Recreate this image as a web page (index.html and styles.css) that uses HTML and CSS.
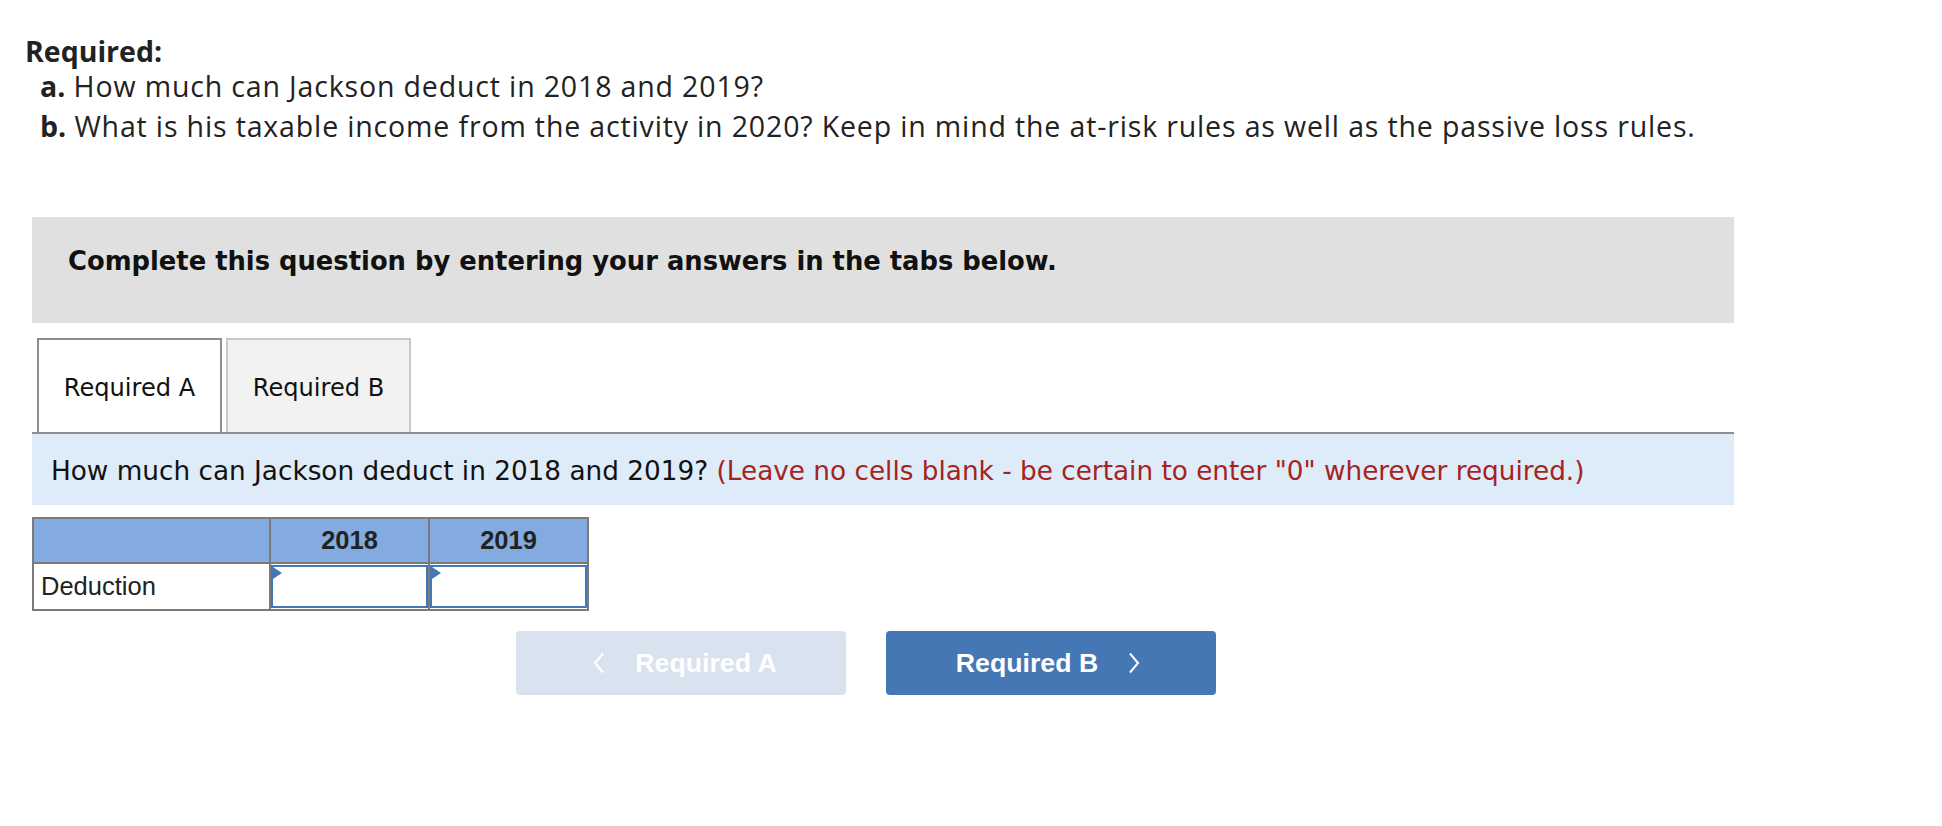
FILE: index.html
```html
<!DOCTYPE html>
<html lang="en">
<head>
<meta charset="utf-8">
<title>Required</title>
<link rel="stylesheet" href="styles.css">
</head>
<body>
<div class="page">
  <div class="req">
    <div class="req-title">Required:</div>
    <div class="req-item"><b>a.</b> How much can Jackson deduct in 2018 and 2019?</div>
    <div class="req-item"><b>b.</b> What is his taxable income from the activity in 2020? Keep in mind the at-risk rules as well as the passive loss rules.</div>
  </div>

  <div class="banner">Complete this question by entering your answers in the tabs below.</div>

  <div class="tabs">
    <div class="tab tab-active">Required A</div>
    <div class="tab tab-idle">Required B</div>
  </div>

  <div class="prompt">How much can Jackson deduct in 2018 and 2019? <span class="note">(Leave no cells blank - be certain to enter "0" wherever required.)</span></div>

  <table class="grid">
    <tr class="head">
      <th class="c-label"></th>
      <th class="c-val">2018</th>
      <th class="c-val">2019</th>
    </tr>
    <tr class="row">
      <td class="c-label label">Deduction</td>
      <td class="c-val cell"><div class="input"><span class="flag"></span></div></td>
      <td class="c-val cell"><div class="input"><span class="flag"></span></div></td>
    </tr>
  </table>

  <div class="nav">
    <div class="btn btn-disabled">
      <svg class="chev" width="12" height="22" viewBox="0 0 12 22"><polyline points="10,1.5 2,11 10,20.5" fill="none" stroke="#ffffff" stroke-width="2"/></svg>
      <span>Required A</span>
    </div>
    <div class="btn btn-primary">
      <span>Required B</span>
      <svg class="chev" width="12" height="22" viewBox="0 0 12 22"><polyline points="2,1.5 10,11 2,20.5" fill="none" stroke="#ffffff" stroke-width="2"/></svg>
    </div>
  </div>
</div>
</body>
</html>
```

FILE: styles.css
```css
html, body {
  margin: 0;
  padding: 0;
  background: #ffffff;
}

.page {
  width: 1702px;
  margin-left: 32px;
  padding-top: 36px;
  color: #222222;
}

.req {
  margin-left: -7px;
  font-family: "Open Sans", "Liberation Sans", sans-serif;
  font-size: 28.5px;
  color: #222222;
}

.req-title {
  font-weight: 700;
  line-height: 30px;
}

.req-item {
  padding-left: 15px;
  line-height: 40px;
  letter-spacing: 0.85px;
}

.req-item b {
  font-weight: 700;
  letter-spacing: 0;
}

.banner {
  box-sizing: border-box;
  height: 106px;
  margin-top: 71px;
  padding: 29px 36px 0;
  background: #e0e0e0;
  font-family: "DejaVu Sans", Verdana, sans-serif;
  font-weight: 700;
  font-size: 25.8px;
  color: #111111;
}

.tabs {
  display: flex;
  gap: 4px;
  margin-top: 15px;
  padding-left: 5px;
  border-bottom: 2px solid #8e8e8e;
}

.tab {
  box-sizing: border-box;
  width: 185px;
  height: 94px;
  display: flex;
  align-items: center;
  justify-content: center;
  padding-top: 4px;
  font-family: "DejaVu Sans", Verdana, sans-serif;
  font-size: 24.1px;
  color: #111111;
}

.tab-active {
  border: 2px solid #8e8e8e;
  border-bottom: none;
  background: #ffffff;
}

.tab-idle {
  border: 2px solid #c8c8c8;
  border-bottom: none;
  background: #f2f2f2;
}

.prompt {
  box-sizing: border-box;
  height: 71px;
  display: flex;
  align-items: center;
  padding-left: 19px;
  padding-top: 2px;
  background: #deebf8;
  font-family: "DejaVu Sans", Verdana, sans-serif;
  font-size: 26.3px;
  color: #111111;
  white-space: pre;
}

.note {
  color: #a6231d;
}

.grid {
  margin-top: 12px;
  border-collapse: collapse;
  font-family: "Liberation Sans", Arial, sans-serif;
  font-size: 25.5px;
  color: #222222;
}

.grid th,
.grid td {
  border: 2px solid #7a7a7a;
  padding: 0;
}

.c-label {
  width: 228px;
}

.c-val {
  width: 157px;
}

.head th {
  height: 43px;
  background: #84abdf;
  font-weight: 700;
  text-align: center;
}

.row td {
  height: 45px;
}

.label {
  padding-left: 7px !important;
  text-align: left;
}

.input {
  position: relative;
  box-sizing: border-box;
  height: 43px;
  border: 2px solid #4677b5;
  background: #ffffff;
}

.flag {
  position: absolute;
  left: 0;
  top: 0;
  width: 0;
  height: 0;
  border-top: 6px solid transparent;
  border-bottom: 6px solid transparent;
  border-left: 9px solid #4677b5;
}

.nav {
  display: flex;
  gap: 40px;
  margin-top: 20px;
  margin-left: 484px;
}

.btn {
  box-sizing: border-box;
  width: 330px;
  height: 64px;
  border-radius: 4px;
  display: flex;
  align-items: center;
  justify-content: center;
  gap: 30px;
  font-family: "Liberation Sans", Arial, sans-serif;
  font-weight: 700;
  font-size: 26.7px;
  color: #ffffff;
}

.btn-disabled {
  padding-left: 8px;
  background: #d9e3ef;
}

.btn-primary {
  padding-right: 6px;
  background: #4677b5;
}

.chev {
  display: block;
}
```
